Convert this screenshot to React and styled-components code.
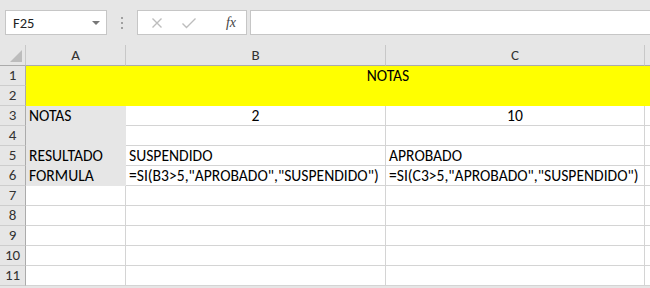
import React from 'react';
import styled, { createGlobalStyle } from 'styled-components';

const GlobalStyle = createGlobalStyle`
	html, body {
		margin: 0;
		padding: 0;
		background: #e6e6e6;
		overflow: hidden;
	}
	body {
		width: 650px;
		height: 288px;
	}
`;

const FONT = `Carlito, Lato, 'Liberation Sans', sans-serif`;

const Page = styled.div`
	width: 650px;
	height: 288px;
	overflow: hidden;
	font-family: ${FONT};
	background: #e6e6e6;
`;

const Toolbar = styled.div`
	display: flex;
	align-items: flex-start;
	height: 45px;
	box-sizing: border-box;
	padding: 10px 0 0 5px;
`;

const NameBox = styled.div`
	box-sizing: border-box;
	width: 102px;
	height: 25px;
	background: #fff;
	border: 1px solid #c6c6c6;
	display: flex;
	align-items: center;
	justify-content: space-between;
	padding: 0 6px 0 7px;
	font-size: 14.5px;
	color: #222;
`;

const DropArrow = styled.span`
	width: 0;
	height: 0;
	border-left: 4px solid transparent;
	border-right: 4px solid transparent;
	border-top: 4px solid #777;
	margin-top: 1px;
`;

const Grip = styled.div`
	width: 30px;
	height: 25px;
	display: flex;
	flex-direction: column;
	align-items: center;
	justify-content: center;
	gap: 3px;
`;

const Dot = styled.span`
	width: 2px;
	height: 2px;
	background: #a0a0a0;
`;

const FxBox = styled.div`
	box-sizing: border-box;
	width: 110px;
	height: 25px;
	background: #fff;
	border: 1px solid #c6c6c6;
	display: flex;
	align-items: center;
	padding: 0 10px 0 13px;
	gap: 18px;
`;

const FxLabel = styled.span`
	font-family: 'Liberation Serif', serif;
	font-style: italic;
	font-size: 14px;
	color: #444;
	margin-left: auto;
`;

const FormulaInput = styled.div`
	box-sizing: border-box;
	flex: 1;
	height: 25px;
	margin-left: 3px;
	background: #fff;
	border: 1px solid #c6c6c6;
	border-right: none;
`;

const Sheet = styled.div`
	display: grid;
	grid-template-columns: 26px 100px 260px 259px 105px;
	grid-auto-rows: 20px;
	grid-template-rows: 21px;
	width: 750px;
	font-size: 15.6px;
	color: #000;
`;

const Corner = styled.div`
	box-sizing: border-box;
	background: #e6e6e6;
	border-right: 1px solid #c8c8c8;
	border-bottom: 1px solid #ababab;
	display: flex;
	align-items: flex-end;
	justify-content: flex-end;
	padding: 0 3px 3px 0;
`;

const ColHead = styled.div`
	box-sizing: border-box;
	background: #e6e6e6;
	border-right: 1px solid #c8c8c8;
	border-bottom: 1px solid #ababab;
	text-align: center;
	line-height: 20px;
	color: #333;
	font-size: 15px;
`;

const RowHead = styled.div`
	box-sizing: border-box;
	background: #e6e6e6;
	border-right: 1px solid #ababab;
	border-bottom: 1px solid #cdcdcd;
	text-align: center;
	line-height: 19px;
	color: #333;
	font-size: 15px;
`;

const Cell = styled.div`
	box-sizing: border-box;
	background: ${(p) => p.$fill || '#fff'};
	border-right: 1px solid ${(p) => p.$fill || '#d4d4d4'};
	border-bottom: 1px solid ${(p) => p.$fill || '#d4d4d4'};
	padding: 0 3px;
	line-height: 19px;
	text-align: ${(p) => p.$align || 'left'};
	white-space: nowrap;
`;

const Merged = styled.div`
	grid-column: 2 / -1;
	grid-row: span 2;
	background: #ffff00;
	text-align: center;
	line-height: 19px;
`;

const GRAY = '#e6e6e6';

const rows = [
	[
		{ v: 'NOTAS', fill: GRAY },
		{ v: '2', align: 'center' },
		{ v: '10', align: 'center' },
	],
	[{ v: '', fill: GRAY }, { v: '' }, { v: '' }],
	[
		{ v: 'RESULTADO', fill: GRAY },
		{ v: 'SUSPENDIDO' },
		{ v: 'APROBADO' },
	],
	[
		{ v: 'FORMULA', fill: GRAY },
		{ v: '=SI(B3>5,"APROBADO","SUSPENDIDO")' },
		{ v: '=SI(C3>5,"APROBADO","SUSPENDIDO")' },
	],
	[{ v: '' }, { v: '' }, { v: '' }],
	[{ v: '' }, { v: '' }, { v: '' }],
	[{ v: '' }, { v: '' }, { v: '' }],
	[{ v: '' }, { v: '' }, { v: '' }],
	[{ v: '' }, { v: '' }, { v: '' }],
];

const App = () => {
	return (
		<Page>
			<GlobalStyle />
			<Toolbar>
				<NameBox>
					<span>F25</span>
					<DropArrow />
				</NameBox>
				<Grip>
					<Dot />
					<Dot />
					<Dot />
				</Grip>
				<FxBox>
					<svg width='12' height='12' viewBox='0 0 12 12'>
						<path
							d='M1.5 1.5 L10.5 10.5 M10.5 1.5 L1.5 10.5'
							stroke='#bdbdbd'
							strokeWidth='1.4'
							fill='none'
						/>
					</svg>
					<svg width='16' height='12' viewBox='0 0 16 12'>
						<path
							d='M1.5 6.5 L5.5 10.5 L14.5 1.5'
							stroke='#bdbdbd'
							strokeWidth='1.4'
							fill='none'
						/>
					</svg>
					<FxLabel>fx</FxLabel>
				</FxBox>
				<FormulaInput />
			</Toolbar>
			<Sheet>
				<Corner>
					<svg width='12' height='12' viewBox='0 0 12 12'>
						<polygon points='12,0 12,12 0,12' fill='#bcbcbc' />
					</svg>
				</Corner>
				{['A', 'B', 'C', ''].map((c, i) => (
					<ColHead key={i}>{c}</ColHead>
				))}
				<RowHead>1</RowHead>
				<Merged>NOTAS</Merged>
				<RowHead>2</RowHead>
				{rows.map((r, i) => (
					<React.Fragment key={i}>
						<RowHead>{i + 3}</RowHead>
						{r.map((c, j) => (
							<Cell key={j} $fill={c.fill} $align={c.align}>
								{c.v}
							</Cell>
						))}
						<Cell />
					</React.Fragment>
				))}
			</Sheet>
		</Page>
	);
};

export default App;
